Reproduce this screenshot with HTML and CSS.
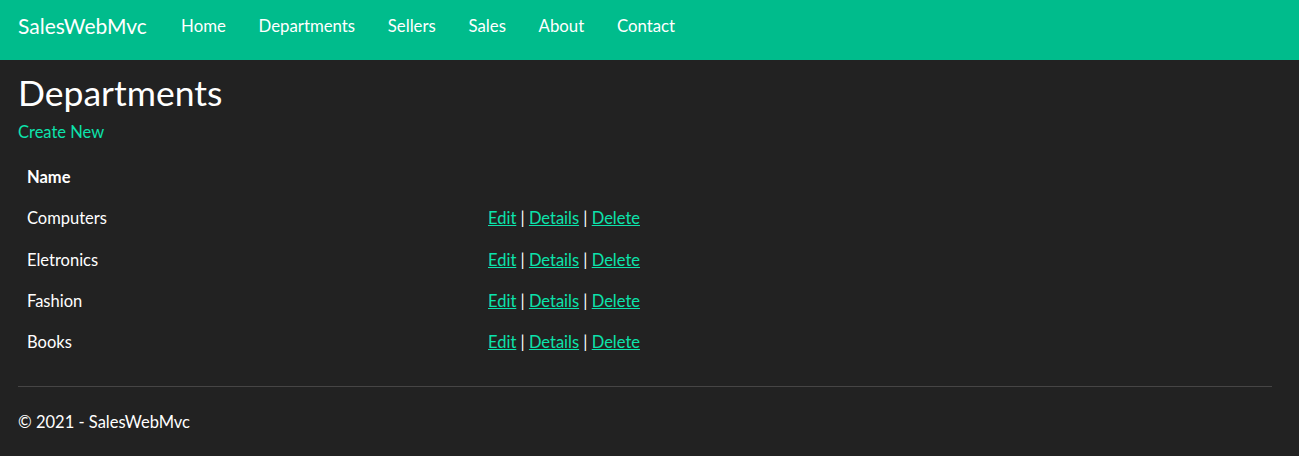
FILE: index.html
```html
<!DOCTYPE html>
<html lang="en">
<head>
<meta charset="utf-8">
<title>Departments - SalesWebMvc</title>
<link rel="stylesheet" href="styles.css">
</head>
<body>
<nav class="navbar">
  <a class="brand" href="#">SalesWebMvc</a>
  <ul class="nav">
    <li><a href="#">Home</a></li>
    <li><a href="#">Departments</a></li>
    <li><a href="#">Sellers</a></li>
    <li><a href="#">Sales</a></li>
    <li><a href="#">About</a></li>
    <li><a href="#">Contact</a></li>
  </ul>
</nav>
<div class="content">
  <h2 class="title">Departments</h2>
  <p class="create"><a href="#">Create New</a></p>
  <table class="table">
    <thead>
      <tr><th class="col-name">Name</th><th></th></tr>
    </thead>
    <tbody>
      <tr><td>Computers</td><td><a href="#" class="u">Edit</a> | <a href="#" class="u">Details</a> | <a href="#" class="u">Delete</a></td></tr>
      <tr><td>Eletronics</td><td><a href="#" class="u">Edit</a> | <a href="#" class="u">Details</a> | <a href="#" class="u">Delete</a></td></tr>
      <tr><td>Fashion</td><td><a href="#" class="u">Edit</a> | <a href="#" class="u">Details</a> | <a href="#" class="u">Delete</a></td></tr>
      <tr><td>Books</td><td><a href="#" class="u">Edit</a> | <a href="#" class="u">Details</a> | <a href="#" class="u">Delete</a></td></tr>
    </tbody>
  </table>
  <hr class="rule">
  <footer class="footer">
    <p>&copy; 2021 - SalesWebMvc</p>
  </footer>
</div>
</body>
</html>
```
FILE: styles.css
```css
html, body {
  margin: 0;
  padding: 0;
}
body {
  background: #222222;
  color: #ffffff;
  font-family: Lato, "Open Sans", "Liberation Sans", sans-serif;
  font-size: 16.5px;
  line-height: 25px;
}
a {
  color: #0ce3ac;
  text-decoration: none;
}
.navbar {
  height: 60px;
  box-sizing: border-box;
  background: #00bc8c;
  display: flex;
  align-items: flex-start;
  padding: 13px 18px 0;
}
.brand {
  color: #ffffff;
  font-size: 21px;
  line-height: 26px;
  margin-right: 18px;
}
.nav {
  list-style: none;
  margin: 0;
  padding: 0;
  display: flex;
}
.nav a {
  color: #ffffff;
  font-size: 16.8px;
  line-height: 26px;
  padding: 0 16.35px;
  display: block;
}
.content {
  padding: 0 27px 0 18px;
}
.title {
  font-size: 35.5px;
  font-weight: 400;
  line-height: 42px;
  margin: 12px 0 6px;
}
.create {
  margin: 0 0 12px;
}
.table {
  width: 100%;
  border-collapse: collapse;
}
.table th, .table td {
  text-align: left;
  padding: 8px 9px;
  vertical-align: top;
}
.table th {
  font-weight: 700;
}
.table tbody td {
  padding: 8px 9px;
  height: 25px;
}
.table tbody tr:first-child td {
  padding-bottom: 9px;
}
.col-name {
  width: 443px;
}
a.u {
  text-decoration: underline;
}
.rule {
  border: 0;
  border-top: 1px solid #464545;
  margin: 23px 0 23px;
}
.footer p {
  margin: 0;
}
```
